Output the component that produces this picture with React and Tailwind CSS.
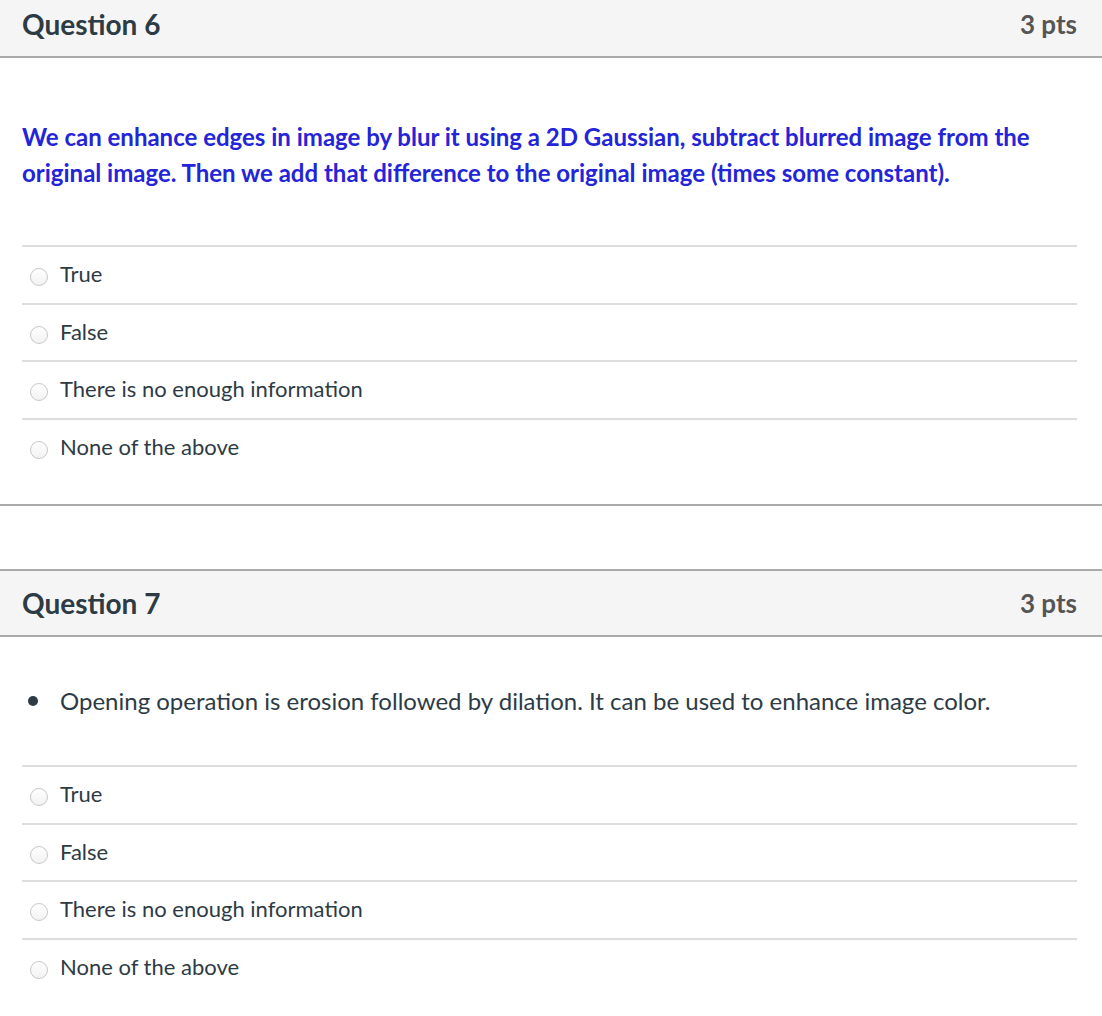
import React from "react";

const options = [
  "True",
  "False",
  "There is no enough information",
  "None of the above",
];

const Radio = () => (
  <span className="mt-[5px] mr-[12px] ml-[8px] inline-block h-[18px] w-[18px] shrink-0 rounded-full border border-[#c8c8c8] bg-gradient-to-b from-white to-[#f2f2f2]"></span>
);

const Answers = () => (
  <div className="ml-[22px] mr-[25px]">
    {options.map((opt) => (
      <div
        key={opt}
        className="flex h-[57.5px] items-center border-t-2 border-[#dddddd] text-[22px] text-[#2d3b45]"
      >
        <Radio />
        <span className="-mt-[2px]">{opt}</span>
      </div>
    ))}
  </div>
);

const Header = ({ title }) => (
  <div className="flex h-[66px] items-center justify-between border-b-2 border-[#aaaaaa] bg-[#f5f5f5] pl-[22px] pr-[25px]">
    <h2 className="text-[28px] font-bold text-[#2d3b45]">{title}</h2>
    <span className="text-[26px] font-bold text-[#555555]">3 pts</span>
  </div>
);

export default function App() {
  return (
    <div
      className="min-h-[1016px] overflow-hidden bg-white"
      style={{ fontFamily: "Lato, 'Open Sans', sans-serif" }}
    >
      {/* Question 6 */}
      <div className="-mt-[10px] border-y-2 border-[#aaaaaa] pb-[29px]">
        <Header title="Question 6" />
        <p className="ml-[22px] mr-[25px] mt-[61px] mb-[54px] text-[24px] font-bold leading-[36px] text-[#2424d8]">
          We can enhance edges in image by blur it using a 2D Gaussian, subtract
          blurred image from the original image. Then we add that difference to
          the original image (times some constant).
        </p>
        <Answers />
      </div>

      {/* Question 7 */}
      <div className="mt-[63px] border-t-2 border-[#aaaaaa] pb-[40px]">
        <Header title="Question 7" />
        <ul className="ml-[22px] mr-[25px] mt-[46px] mb-[46px] text-[24px] leading-[36px] text-[#2d3b45]">
          <li className="flex items-center">
            <span className="ml-[6px] mr-[22px] inline-block h-[10px] w-[10px] shrink-0 rounded-full bg-[#2d3b45]"></span>
            <span>
              Opening operation is erosion followed by dilation. It can be used
              to enhance image color.
            </span>
          </li>
        </ul>
        <Answers />
      </div>
    </div>
  );
}
